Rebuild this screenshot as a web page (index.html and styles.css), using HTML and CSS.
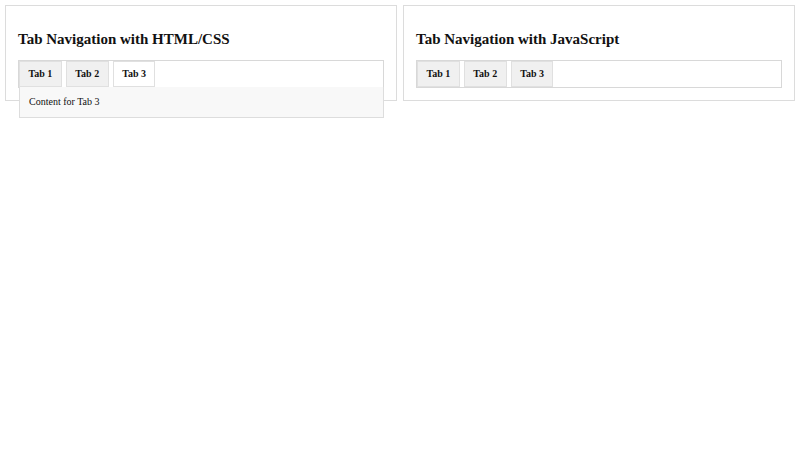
FILE: index.html
```html
<!DOCTYPE html>
<html>
<head>
<meta charset="utf-8">
<link rel="stylesheet" href="styles.css">
</head>
<body>
<div class="page">
  <section class="panel">
    <h2 class="title">Tab Navigation with HTML/CSS</h2>
    <div class="tabs">
      <div class="tab-bar">
        <span class="tab">Tab 1</span>
        <span class="tab">Tab 2</span>
        <span class="tab active">Tab 3</span>
      </div>
      <div class="tab-content">Content for Tab 3</div>
    </div>
  </section>
  <section class="panel">
    <h2 class="title">Tab Navigation with JavaScript</h2>
    <div class="tabs">
      <div class="tab-bar">
        <span class="tab">Tab 1</span>
        <span class="tab">Tab 2</span>
        <span class="tab">Tab 3</span>
      </div>
    </div>
  </section>
</div>
</body>
</html>
```
FILE: styles.css
```css
html, body {
  margin: 0;
  padding: 0;
  background: #fff;
  font-family: "Liberation Serif", "Times New Roman", serif;
  font-size: 10px;
  color: #111;
}
body {
  min-height: 100vh;
}
.page {
  display: flex;
  gap: 6px;
  padding: 5px;
  align-items: flex-start;
}
.panel {
  flex: 1;
  border: 1px solid #dcdcdc;
  padding: 12px;
}
.title {
  font-size: 15px;
  font-weight: bold;
  margin: 12.5px 0;
}
.tabs {
  position: relative;
}
.tab-bar {
  display: flex;
  border: 1px solid #d8d8d8;
  height: 26px;
}
.tab {
  font-size: 10px;
  font-weight: bold;
  padding: 0 8.5px;
  line-height: 24px;
  background: #f0f0f0;
  border: 1px solid #e0e0e0;
  margin-right: 4px;
}
.tab.active {
  background: #fff;
}
.tab-content {
  position: absolute;
  z-index: 1;
  left: 1px;
  right: 0;
  top: 27px;
  height: 30px;
  line-height: 30px;
  padding: 0 9px;
  font-size: 10px;
  background: #f8f8f8;
  border: 1px solid #dddddd;
  border-top: none;
}
```
